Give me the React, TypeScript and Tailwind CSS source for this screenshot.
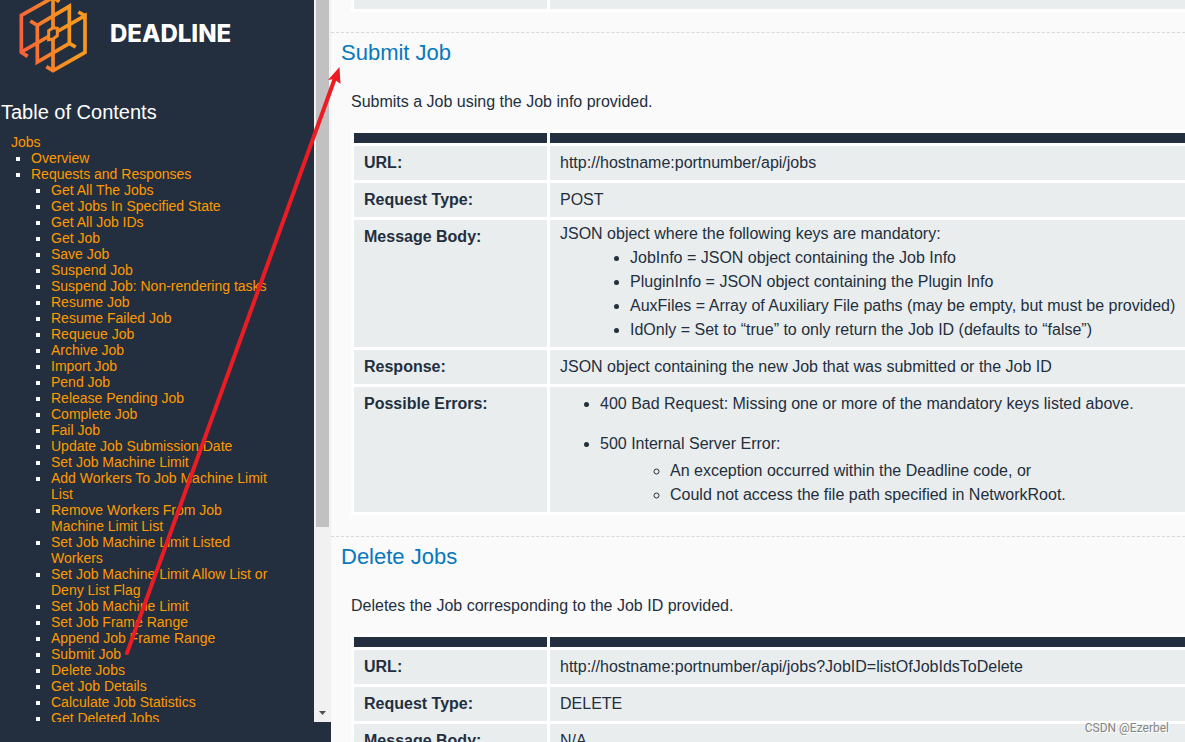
import type { ReactNode } from "react";

const links: string[] = [
  "Get All The Jobs",
  "Get Jobs In Specified State",
  "Get All Job IDs",
  "Get Job",
  "Save Job",
  "Suspend Job",
  "Suspend Job: Non-rendering tasks",
  "Resume Job",
  "Resume Failed Job",
  "Requeue Job",
  "Archive Job",
  "Import Job",
  "Pend Job",
  "Release Pending Job",
  "Complete Job",
  "Fail Job",
  "Update Job Submission Date",
  "Set Job Machine Limit",
  "Add Workers To Job Machine Limit List",
  "Remove Workers From Job Machine Limit List",
  "Set Job Machine Limit Listed Workers",
  "Set Job Machine Limit Allow List or Deny List Flag",
  "Set Job Machine Limit",
  "Set Job Frame Range",
  "Append Job Frame Range",
  "Submit Job",
  "Delete Jobs",
  "Get Job Details",
  "Calculate Job Statistics",
  "Get Deleted Jobs",
];

function Logo() {
  return (
    <svg className="h-20 w-[90px]" viewBox="0 0 270 240" fill="none" aria-hidden="true">
      <defs>
        <linearGradient id="mark" gradientUnits="userSpaceOnUse" x1="30" y1="110" x2="180" y2="90">
          <stop offset="0" stopColor="#f9603c" />
          <stop offset="0.6" stopColor="#f68526" />
          <stop offset="1" stopColor="#f8981f" />
        </linearGradient>
      </defs>
      <g stroke="url(#mark)" strokeWidth="11">
        <path d="M148 5L130 -8L34 46V157L53 169" />
        <path d="M34 156L225 47V157L129 212L109 200" />
        <path d="M225 47L205 36" />
        <path d="M61 63L82 76L178 19V130L82 186V76" />
        <path d="M178 130L197 141" />
        <path d="M129 -6V84M129 118V212" />
      </g>
      <path d="M116 92L129 83L142 85V107L129 117L116 119Z" fill="#232f3e" stroke="#f68b27" strokeWidth="9" />
    </svg>
  );
}

function TocLink({ children }: { children: string }) {
  return (
    <a href="#jobs" className="text-[#ff9900]">
      {children}
    </a>
  );
}

function Sidebar() {
  return (
    <aside className="flex h-screen w-[331px] shrink-0 bg-[#232f3e] pb-5 text-white">
      <div className="min-w-0 flex-1 overflow-hidden">
        <div className="flex items-start gap-[10px] pl-[10px]">
          <Logo />
          <span className="pt-[18px] font-[Inter,sans-serif] text-2xl leading-8 font-extrabold">DEADLINE</span>
        </div>
        <h2 className="mt-5 pl-px text-xl leading-6">Table of Contents</h2>
        <nav className="mt-[10px] pr-10 pl-[11px] text-sm leading-4">
          <TocLink>Jobs</TocLink>
          <ul className="list-[square] pl-5">
            <li>
              <TocLink>Overview</TocLink>
            </li>
            <li>
              <TocLink>Requests and Responses</TocLink>
              <ul className="list-[square] pl-5">
                {links.map((label, i) => (
                  <li key={i}>
                    <TocLink>{label}</TocLink>
                  </li>
                ))}
              </ul>
            </li>
          </ul>
        </nav>
      </div>
      <div className="flex w-[17px] flex-col items-center justify-between bg-[#f1f1f1]" aria-hidden="true">
        <div className="h-[73%] w-[13px] bg-[#c1c1c1]" />
        <svg className="mb-[7px] h-1 w-[7px]" viewBox="0 0 7 4">
          <path d="M0 0H7L3.5 4Z" fill="#505050" />
        </svg>
      </div>
    </aside>
  );
}

function Row({ label, tight, children }: { label: string; tight?: boolean; children: ReactNode }) {
  return (
    <tr className="bg-[#e9eded]">
      <th scope="row" className="px-[10px] py-[5px] text-left align-top font-bold">
        {label}
      </th>
      <td className={tight ? "px-[10px] pt-[2px] pb-[5px] align-top" : "px-[10px] py-[5px] align-top"}>{children}</td>
    </tr>
  );
}

function Table({ children }: { children: ReactNode }) {
  return (
    <table className="w-[calc(100%+3px)] table-fixed border-separate border-spacing-[3px] bg-white">
      <colgroup>
        <col className="w-[193px]" />
        <col />
      </colgroup>
      {children}
    </table>
  );
}

function Section({ title, intro, children }: { title: string; intro: string; children: ReactNode }) {
  return (
    <section className="mb-[21px] border-t border-dashed border-[#d5dbdb] pt-2">
      <h3 className="pl-[10px] text-[22px] leading-6 text-[#0878bd]">{title}</h3>
      <div className="pl-5">
        <p className="mt-[25px] mb-4">{intro}</p>
        <Table>
          <thead>
            <tr className="h-[10px] bg-[#232f3e]">
              <td className="p-0" />
              <td className="p-0" />
            </tr>
          </thead>
          <tbody>{children}</tbody>
        </Table>
      </div>
    </section>
  );
}

export default function App() {
  return (
    <div className="relative flex h-screen overflow-hidden bg-[#fafafa] font-['Liberation_Sans',Arial,sans-serif] text-base leading-6 text-[#232f3e]">
      <Sidebar />
      <main className="h-screen min-w-0 flex-1 overflow-hidden">
        <div className="-mt-[3px] mb-5 pl-5">
          <Table>
            <tbody>
              <tr className="h-[9px] bg-[#e9eded]">
                <td className="p-0" />
                <td className="p-0" />
              </tr>
            </tbody>
          </Table>
        </div>
        <Section title="Submit Job" intro="Submits a Job using the Job info provided.">
          <Row label="URL:">http://hostname:portnumber/api/jobs</Row>
          <Row label="Request Type:">POST</Row>
          <Row label="Message Body:" tight>
            JSON object where the following keys are mandatory:
            <ul className="list-disc pl-[70px]">
              <li>JobInfo = JSON object containing the Job Info</li>
              <li>PluginInfo = JSON object containing the Plugin Info</li>
              <li className="whitespace-nowrap">AuxFiles = Array of Auxiliary File paths (may be empty, but must be provided)</li>
              <li>IdOnly = Set to “true” to only return the Job ID (defaults to “false”)</li>
            </ul>
          </Row>
          <Row label="Response:">JSON object containing the new Job that was submitted or the Job ID</Row>
          <Row label="Possible Errors:">
            <ul className="list-disc space-y-4 pl-10">
              <li>400 Bad Request: Missing one or more of the mandatory keys listed above.</li>
              <li>
                500 Internal Server Error:
                <ul className="mt-[3px] list-[circle] pl-[70px]">
                  <li>An exception occurred within the Deadline code, or</li>
                  <li>Could not access the file path specified in NetworkRoot.</li>
                </ul>
              </li>
            </ul>
          </Row>
        </Section>
        <Section title="Delete Jobs" intro="Deletes the Job corresponding to the Job ID provided.">
          <Row label="URL:">http://hostname:portnumber/api/jobs?JobID=listOfJobIdsToDelete</Row>
          <Row label="Request Type:">DELETE</Row>
          <Row label="Message Body:">N/A</Row>
        </Section>
      </main>
      <svg className="pointer-events-none absolute top-[60px] left-[120px] h-[600px] w-[230px]" viewBox="120 60 230 600" aria-hidden="true">
        <path d="M127 653L335 78" stroke="#ed1c24" strokeWidth="4" strokeLinecap="round" />
        <path d="M339.5 67L328 80L334 79L340.5 84Z" fill="#ed1c24" />
      </svg>
      <span className="absolute right-4 bottom-[6px] font-[Roboto,sans-serif] text-xs leading-4 text-[#858585] [text-shadow:1px_1px_0_#ffffff]">
        CSDN @Ezerbel
      </span>
    </div>
  );
}
